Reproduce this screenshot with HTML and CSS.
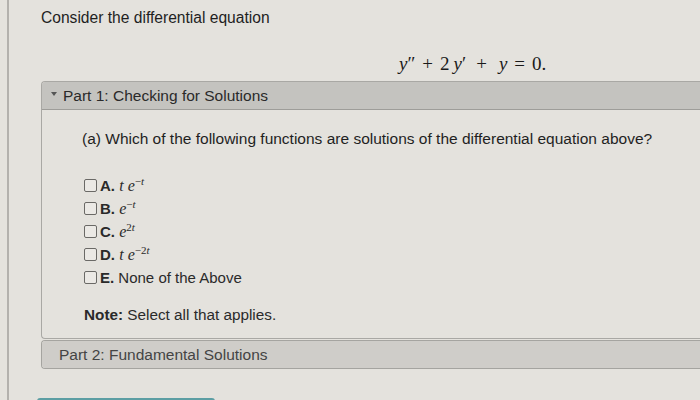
FILE: index.html
```html
<!DOCTYPE html>
<html>
<head>
<meta charset="utf-8">
<link rel="stylesheet" href="styles.css">
</head>
<body>
<div class="page">
  <p class="intro">Consider the differential equation</p>
  <div class="equation"><i>y</i>″<span class="op">+</span>2<span class="sp"></span><i>y</i>′<span class="op wide">+</span><i>y</i><span class="op">=</span>0.</div>

  <section class="part open">
    <div class="part-head"><span class="tri"></span><span>Part 1: Checking for Solutions</span></div>
    <div class="part-body">
      <p class="question">(a) Which of the following functions are solutions of the differential equation above?</p>
      <ul class="options">
        <li><span class="box"></span><span><b>A.</b> <span class="m"><i>t</i> <i>e</i><sup>−<i>t</i></sup></span></span></li>
        <li><span class="box"></span><span><b>B.</b> <span class="m"><i>e</i><sup>−<i>t</i></sup></span></span></li>
        <li><span class="box"></span><span><b>C.</b> <span class="m"><i>e</i><sup>2<i>t</i></sup></span></span></li>
        <li><span class="box"></span><span><b>D.</b> <span class="m"><i>t</i> <i>e</i><sup>−2<i>t</i></sup></span></span></li>
        <li><span class="box"></span><span><b>E.</b> None of the Above</span></li>
      </ul>
      <p class="note"><b>Note:</b> Select all that applies.</p>
    </div>
  </section>

  <section class="part closed">
    <div class="part-head"><span>Part 2: Fundamental Solutions</span></div>
  </section>

  <div class="button-top"></div>
</div>
</body>
</html>
```
FILE: styles.css
```css
html, body {
  margin: 0;
  padding: 0;
  background: #e4e2dd;
  overflow: hidden;
}
body {
  font-family: "Liberation Sans", Arial, sans-serif;
  color: #1f1f1f;
  width: 700px;
  height: 400px;
}
.page {
  margin-left: 7px;
  border-left: 2px solid #b3b1ad;
  padding-left: 31px;
  height: 400px;
  box-sizing: border-box;
  padding-top: 9px;
  overflow: hidden;
}
.intro {
  margin: 0;
  font-size: 15.6px;
  line-height: 18px;
  padding-left: 1px;
}
.equation {
  font-family: "Liberation Serif", "Times New Roman", serif;
  font-size: 19px;
  line-height: 20px;
  margin-top: 27px;
  padding-left: 359px;
  color: #1a1a1a;
  display: flex;
  align-items: baseline;
}
.op { margin: 0 7px; }
.op.wide { margin: 0 12px 0 10px; }
.sp { width: 4px; }
.part {
  margin-left: 1px;
  width: 660px;
  border: 1px solid #a9a8a4;
  border-right: none;
  border-radius: 4px 0 0 4px;
  box-sizing: border-box;
}
.open {
  margin-top: 7px;
  height: 258px;
}
.part-head {
  background: #c4c3bf;
  height: 27px;
  font-size: 15.5px;
  border-bottom: 1px solid #9e9d99;
  border-radius: 3px 0 0 0;
  padding-left: 9px;
  display: flex;
  align-items: center;
  color: #2a2a2a;
}
.tri {
  width: 0;
  height: 0;
  border-left: 3px solid transparent;
  border-right: 3px solid transparent;
  border-top: 4px solid #555;
  margin-right: 6px;
  margin-top: -3px;
}
.part-body {
  padding: 20px 0 0 40px;
}
.question {
  margin: 0;
  font-size: 15.5px;
  line-height: 18px;
}
.options {
  list-style: none;
  margin: 26px 0 0 2px;
  padding: 0;
}
.options li {
  display: flex;
  align-items: center;
  height: 23px;
  font-size: 15px;
  color: #2a2a2a;
}
.options b { font-weight: bold; }
.box {
  width: 11px;
  height: 11px;
  border: 1px solid #6a6966;
  border-radius: 2px;
  background: #ebe9e5;
  margin-right: 3px;
  flex: none;
}
.m {
  font-family: "Liberation Serif", "Times New Roman", serif;
  font-size: 16px;
}
.m sup {
  font-size: 11px;
  vertical-align: 6px;
  line-height: 0;
}
.note {
  margin: 17px 0 0 2px;
  font-size: 15.3px;
  line-height: 18px;
  color: #2a2a2a;
}
.closed {
  margin-top: 1px;
  border-color: #a5a4a0;
}
.closed .part-head {
  background: #cfcdc9;
  border-bottom: none;
  border-radius: 3px 0 0 3px;
  padding-left: 17px;
  color: #444;
}
.button-top {
  margin-top: 29px;
  margin-left: -3px;
  width: 178px;
  height: 8px;
  background: #5c9ea3;
  border-radius: 3px 3px 0 0;
}
```
